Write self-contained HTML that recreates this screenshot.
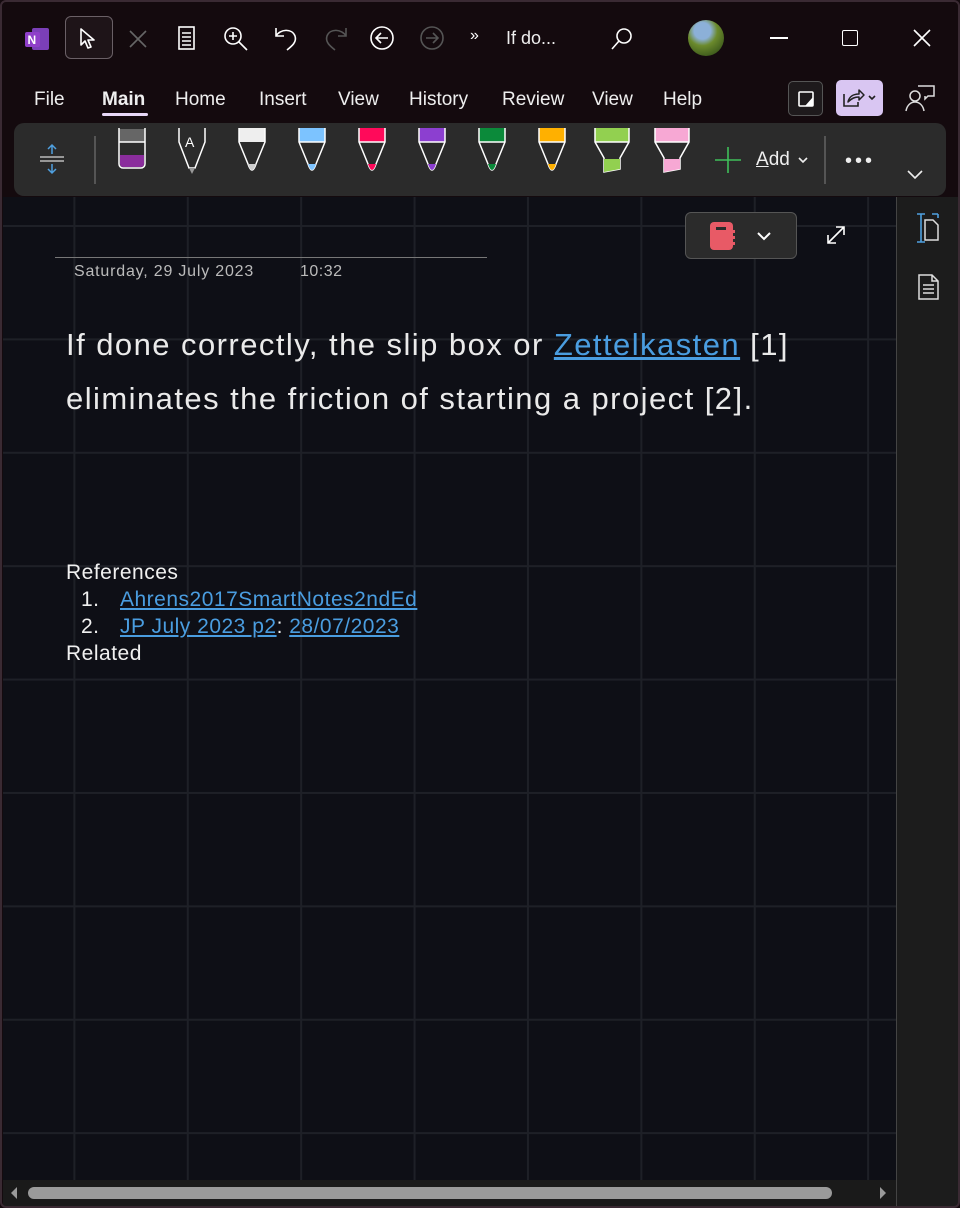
<!DOCTYPE html>
<html><head><meta charset="utf-8"><style>
*{margin:0;padding:0;box-sizing:border-box}
body{width:960px;height:1208px;background:#140a0e;font-family:"Liberation Sans",sans-serif;color:#fff;position:relative;overflow:hidden}
.abs{position:absolute}
.tab{position:absolute;top:89px;font-size:19px;color:#eee}
#canvas{position:absolute;left:3px;top:197px;width:893px;height:983px;background-color:#0e0f16;
background-image:linear-gradient(to right,#1e2027 2px,transparent 2px),linear-gradient(to bottom,#1e2027 2px,transparent 2px);
background-size:113.4px 113.4px;background-position:-43px 28px}
a{color:#4a9de0;text-decoration:underline}
.li{position:absolute;left:54px;white-space:nowrap}
</style></head><body>
<div class="abs" style="left:0;top:0;width:960px;height:1208px;border:2px solid #3a2a33;border-radius:6px;pointer-events:none;z-index:10"></div>

<svg class="abs" style="left:24px;top:26px" width="26" height="26" viewBox="0 0 26 26"><rect x="8" y="2" width="17" height="22" rx="2" fill="#7b3fb8"/><rect x="1" y="6" width="15" height="15" rx="2" fill="#8f3fc9"/><text x="3.5" y="18" font-size="12" font-weight="bold" fill="#fff" font-family="Liberation Sans">N</text></svg>
<div class="abs" style="left:65px;top:16px;width:48px;height:43px;border:1px solid #6a6066;border-radius:6px;background:#1e1418"></div>
<svg class="abs" style="left:78px;top:27px" width="22" height="24" viewBox="0 0 22 24"><path d="M3 2 L3 18 L7 14 L10 21 L13 20 L10 13 L16 13 Z" fill="none" stroke="#fff" stroke-width="1.6" stroke-linejoin="round"/></svg>
<svg class="abs" style="left:128px;top:29px" width="20" height="20"><path d="M2 2L18 18M18 2L2 18" stroke="#666" stroke-width="1.6"/></svg>
<svg class="abs" style="left:176px;top:26px" width="22" height="25"><rect x="3" y="1" width="15" height="22" fill="none" stroke="#fff" stroke-width="1.6"/><path d="M6 7h9M6 11h9M6 15h9M6 19h9" stroke="#fff" stroke-width="1.4"/></svg>
<svg class="abs" style="left:222px;top:25px" width="28" height="28"><circle cx="11" cy="11" r="8" fill="none" stroke="#fff" stroke-width="1.6"/><path d="M17 17L25 25M7 11h8M11 7v8" stroke="#fff" stroke-width="1.6"/></svg>
<svg class="abs" style="left:272px;top:24px" width="28" height="28"><path d="M4 4v8h8M4 12 C8 5 20 4 23 12 C25 18 20 22 15 26" fill="none" stroke="#fff" stroke-width="1.6"/></svg>
<svg class="abs" style="left:322px;top:24px" width="28" height="28"><path d="M24 4v8h-8M24 12 C20 5 8 4 5 12 C3 18 8 22 13 26" fill="none" stroke="#555" stroke-width="1.6"/></svg>
<svg class="abs" style="left:369px;top:25px" width="26" height="26"><circle cx="13" cy="13" r="11" fill="none" stroke="#fff" stroke-width="1.6"/><path d="M19 13H7M12 8L7 13L12 18" fill="none" stroke="#fff" stroke-width="1.6"/></svg>
<svg class="abs" style="left:419px;top:25px" width="26" height="26"><circle cx="13" cy="13" r="11" fill="none" stroke="#555" stroke-width="1.6"/><path d="M7 13H19M14 8L19 13L14 18" fill="none" stroke="#555" stroke-width="1.6"/></svg>
<div class="abs" style="left:470px;top:27px;font-size:16px;color:#fff">»</div>
<div class="abs" style="left:506px;top:28px;font-size:18px;color:#eee">If do...</div>
<svg class="abs" style="left:609px;top:26px" width="26" height="26"><circle cx="15" cy="10" r="7" fill="none" stroke="#fff" stroke-width="1.6"/><path d="M10 15L3 23" stroke="#fff" stroke-width="1.6"/></svg>
<div class="abs" style="left:688px;top:20px;width:36px;height:36px;border-radius:50%;background:radial-gradient(circle at 40% 30%,#8cb0d8 0 25%,#6b8a2c 45%,#3d5a1c 80%)"></div>
<div class="abs" style="left:770px;top:37px;width:18px;height:1.5px;background:#fff"></div>
<div class="abs" style="left:842px;top:30px;width:16px;height:16px;border:1.6px solid #fff;border-radius:2px"></div>
<svg class="abs" style="left:913px;top:29px" width="18" height="18"><path d="M1 1L17 17M17 1L1 17" stroke="#fff" stroke-width="1.6"/></svg>

<div class="tab" style="left:34px">File</div>
<div class="tab" style="left:102px;font-weight:bold">Main</div>
<div class="abs" style="left:102px;top:113px;width:46px;height:3px;border-radius:2px;background:#e8d8f8"></div>
<div class="tab" style="left:175px">Home</div>
<div class="tab" style="left:259px">Insert</div>
<div class="tab" style="left:338px">View</div>
<div class="tab" style="left:409px">History</div>
<div class="tab" style="left:502px">Review</div>
<div class="tab" style="left:592px">View</div>
<div class="tab" style="left:663px">Help</div>
<div class="abs" style="left:788px;top:81px;width:35px;height:35px;border:1px solid #555;border-radius:5px;background:#1e1a1c"></div>
<svg class="abs" style="left:796px;top:89px" width="20" height="20"><rect x="3" y="3" width="14" height="14" rx="1" fill="none" stroke="#fff" stroke-width="1.6"/><path d="M17 8L9 17h8z" fill="#fff"/></svg>
<div class="abs" style="left:836px;top:80px;width:47px;height:36px;border-radius:5px;background:#d9c6f2"></div>
<svg class="abs" style="left:840px;top:86px" width="40" height="24"><path d="M4 8v12h14v-4" fill="none" stroke="#222" stroke-width="1.6"/><path d="M8 16c1-5 5-8 11-8V4l5 5-5 5v-3c-4 0-7 1-11 5z" fill="none" stroke="#222" stroke-width="1.5" stroke-linejoin="round"/><path d="M29 10l3 3 3-3" fill="none" stroke="#222" stroke-width="1.6"/></svg>
<svg class="abs" style="left:904px;top:84px" width="32" height="30"><circle cx="11" cy="12" r="5" fill="none" stroke="#ddd" stroke-width="1.5"/><path d="M2 27c1-6 5-9 9-9s8 3 9 9" fill="none" stroke="#ddd" stroke-width="1.5"/><path d="M14 2h16v10h-6l-3 3v-3" fill="none" stroke="#ddd" stroke-width="1.5"/></svg>

<div class="abs" style="left:14px;top:123px;width:932px;height:73px;border-radius:10px;background:#2b2b2b"></div>
<svg class="abs" style="left:38px;top:143px" width="28" height="32"><path d="M2 14h24M2 18h24" stroke="#bbb" stroke-width="1.5"/><path d="M14 2v9M10 6l4-4 4 4M14 21v9M10 26l4 4 4-4" fill="none" stroke="#4fa0e0" stroke-width="1.5"/></svg>
<div class="abs" style="left:94px;top:136px;width:2px;height:48px;background:#555"></div>
<svg class="abs" style="left:117px;top:128px" width="30" height="46"><rect x="2" y="1" width="26" height="13" fill="#666"/><path d="M2 0v36a4 4 0 0 0 4 4h18a4 4 0 0 0 4-4V0M2 14h26" fill="none" stroke="#fff" stroke-width="1.5"/><path d="M3 27h24v9a3 3 0 0 1-3 3H6a3 3 0 0 1-3-3z" fill="#8a2d9c"/></svg>
<svg class="abs" style="left:177px;top:128px" width="30" height="46"><path d="M2 0v14L12 40h6L28 14V0" fill="none" stroke="#fff" stroke-width="1.5"/><path d="M12 40l3 6 3-6z" fill="#999"/><text x="8" y="19" font-size="14" fill="#fff" font-family="Liberation Sans">A</text></svg>
<svg class="abs" style="left:237px;top:128px" width="30" height="46"><rect x="2" y="0" width="26" height="14" fill="#eee"/><path d="M2 0v14L11 36Q15 48 19 36L28 14V0" fill="none" stroke="#fff" stroke-width="1.5"/><path d="M11 36h8Q15 48 11 36z" fill="#ccc"/></svg>
<svg class="abs" style="left:297px;top:128px" width="30" height="46"><rect x="2" y="0" width="26" height="14" fill="#7cc3ff"/><path d="M2 0v14L11 36Q15 48 19 36L28 14V0M2 14h26" fill="none" stroke="#fff" stroke-width="1.5"/><path d="M11 36h8Q15 48 11 36z" fill="#7cc3ff"/></svg>
<svg class="abs" style="left:357px;top:128px" width="30" height="46"><rect x="2" y="0" width="26" height="14" fill="#ff0a5a"/><path d="M2 0v14L11 36Q15 48 19 36L28 14V0M2 14h26" fill="none" stroke="#fff" stroke-width="1.5"/><path d="M11 36h8Q15 48 11 36z" fill="#ff0a5a"/></svg>
<svg class="abs" style="left:417px;top:128px" width="30" height="46"><rect x="2" y="0" width="26" height="14" fill="#8c3fd0"/><path d="M2 0v14L11 36Q15 48 19 36L28 14V0M2 14h26" fill="none" stroke="#fff" stroke-width="1.5"/><path d="M11 36h8Q15 48 11 36z" fill="#8c3fd0"/></svg>
<svg class="abs" style="left:477px;top:128px" width="30" height="46"><rect x="2" y="0" width="26" height="14" fill="#0b8a3a"/><path d="M2 0v14L11 36Q15 48 19 36L28 14V0M2 14h26" fill="none" stroke="#fff" stroke-width="1.5"/><path d="M11 36h8Q15 48 11 36z" fill="#0b8a3a"/></svg>
<svg class="abs" style="left:537px;top:128px" width="30" height="46"><rect x="2" y="0" width="26" height="14" fill="#ffb000"/><path d="M2 0v14L11 36Q15 48 19 36L28 14V0M2 14h26" fill="none" stroke="#fff" stroke-width="1.5"/><path d="M11 36h8Q15 48 11 36z" fill="#ffb000"/></svg>
<svg class="abs" style="left:593px;top:128px" width="38" height="46"><rect x="2" y="0" width="34" height="14" fill="#92d050"/><path d="M2 0v14L11 30v14l16-3V30L36 14V0M2 14h34" fill="none" stroke="#fff" stroke-width="1.5"/><path d="M11 31h16v10l-16 3z" fill="#92d050"/></svg>
<svg class="abs" style="left:653px;top:128px" width="38" height="46"><rect x="2" y="0" width="34" height="14" fill="#f7a8d4"/><path d="M2 0v14L11 30v14l16-3V30L36 14V0M2 14h34" fill="none" stroke="#fff" stroke-width="1.5"/><path d="M11 31h16v10l-16 3z" fill="#f7a8d4"/></svg>
<svg class="abs" style="left:714px;top:146px" width="28" height="28"><path d="M14 1v26M1 14h26" stroke="#3fbf5a" stroke-width="1.6"/></svg>
<div class="abs" style="left:756px;top:149px;font-size:19px;color:#eee"><u>A</u>dd</div>
<svg class="abs" style="left:797px;top:155px" width="12" height="10"><path d="M2 3l4 4 4-4" fill="none" stroke="#eee" stroke-width="1.6"/></svg>
<div class="abs" style="left:824px;top:136px;width:2px;height:48px;background:#555"></div>
<div class="abs" style="left:845px;top:150px;font-size:20px;color:#eee;letter-spacing:3px">•••</div>
<svg class="abs" style="left:906px;top:169px" width="18" height="12"><path d="M2 2l7 7 7-7" fill="none" stroke="#eee" stroke-width="1.6"/></svg>

<div id="canvas"></div>
<div class="abs" style="left:896px;top:197px;width:62px;height:1009px;background:#1c1c1c;border-left:1px solid #444"></div>
<svg class="abs" style="left:914px;top:212px" width="28" height="32"><path d="M3 2h8M3 30h8M7 2v28" stroke="#4fa0e0" stroke-width="1.6"/><path d="M18 2h6M24 2v4" stroke="#4fa0e0" stroke-width="1.6"/><path d="M11 8h8l5 5v15H11z" fill="none" stroke="#ddd" stroke-width="1.5"/></svg>
<svg class="abs" style="left:917px;top:273px" width="24" height="28"><path d="M2 2h13l6 6v18H2z M15 2v6h6 M6 12h11M6 16h11M6 20h11" fill="none" stroke="#ddd" stroke-width="1.5"/></svg>
<div class="abs" style="left:685px;top:212px;width:112px;height:47px;border:1px solid #555;border-radius:6px;background:#2b2b2b"></div>
<svg class="abs" style="left:708px;top:221px" width="30" height="30"><rect x="2" y="1" width="23" height="28" rx="4" fill="#e85a66"/><rect x="8" y="6" width="10" height="3" fill="#2b2b2b"/><path d="M26 9v3M26 15v3M26 21v3" stroke="#e85a66" stroke-width="2"/></svg>
<svg class="abs" style="left:756px;top:230px" width="16" height="12"><path d="M2 3l6 6 6-6" fill="none" stroke="#fff" stroke-width="2"/></svg>
<svg class="abs" style="left:825px;top:224px" width="22" height="22"><path d="M3 19L19 3M11 3h8v8M3 11v8h8" fill="none" stroke="#fff" stroke-width="1.6"/></svg>

<div class="abs" style="left:55px;top:257px;width:432px;height:1px;background:#777"></div>
<div class="abs" style="left:74px;top:263px;font-size:16px;color:#bbb;letter-spacing:0.8px;white-space:nowrap">Saturday, 29 July 2023</div>
<div class="abs" style="left:300px;top:263px;font-size:16px;color:#bbb;letter-spacing:0.5px">10:32</div>
<div class="abs" style="left:66px;top:318px;font-size:31px;line-height:54px;color:#eaeaea;letter-spacing:1.45px;white-space:nowrap">If done correctly, the slip box or <a>Zettelkasten</a> [1]<br>eliminates the friction of starting a project [2].</div>
<div class="abs" style="left:66px;top:559px;width:500px;font-size:21px;line-height:27px;color:#f0f0f0;white-space:nowrap;letter-spacing:0.5px">References<br>
<span style="padding-left:15px">1.</span><span class="li"><a>Ahrens2017SmartNotes2ndEd</a></span><br>
<span style="padding-left:15px">2.</span><span class="li"><a>JP July 2023 p2</a>: <a>28/07/2023</a></span><br>Related</div>

<div class="abs" style="left:3px;top:1180px;width:893px;height:26px;background:#1a1a1a"></div>
<div class="abs" style="left:28px;top:1187px;width:804px;height:12px;border-radius:6px;background:#9a9a9a"></div>
<svg class="abs" style="left:9px;top:1186px" width="10" height="14"><path d="M8 1L2 7l6 6z" fill="#9a9a9a"/></svg>
<svg class="abs" style="left:878px;top:1186px" width="10" height="14"><path d="M2 1l6 6-6 6z" fill="#9a9a9a"/></svg>
</body></html>
